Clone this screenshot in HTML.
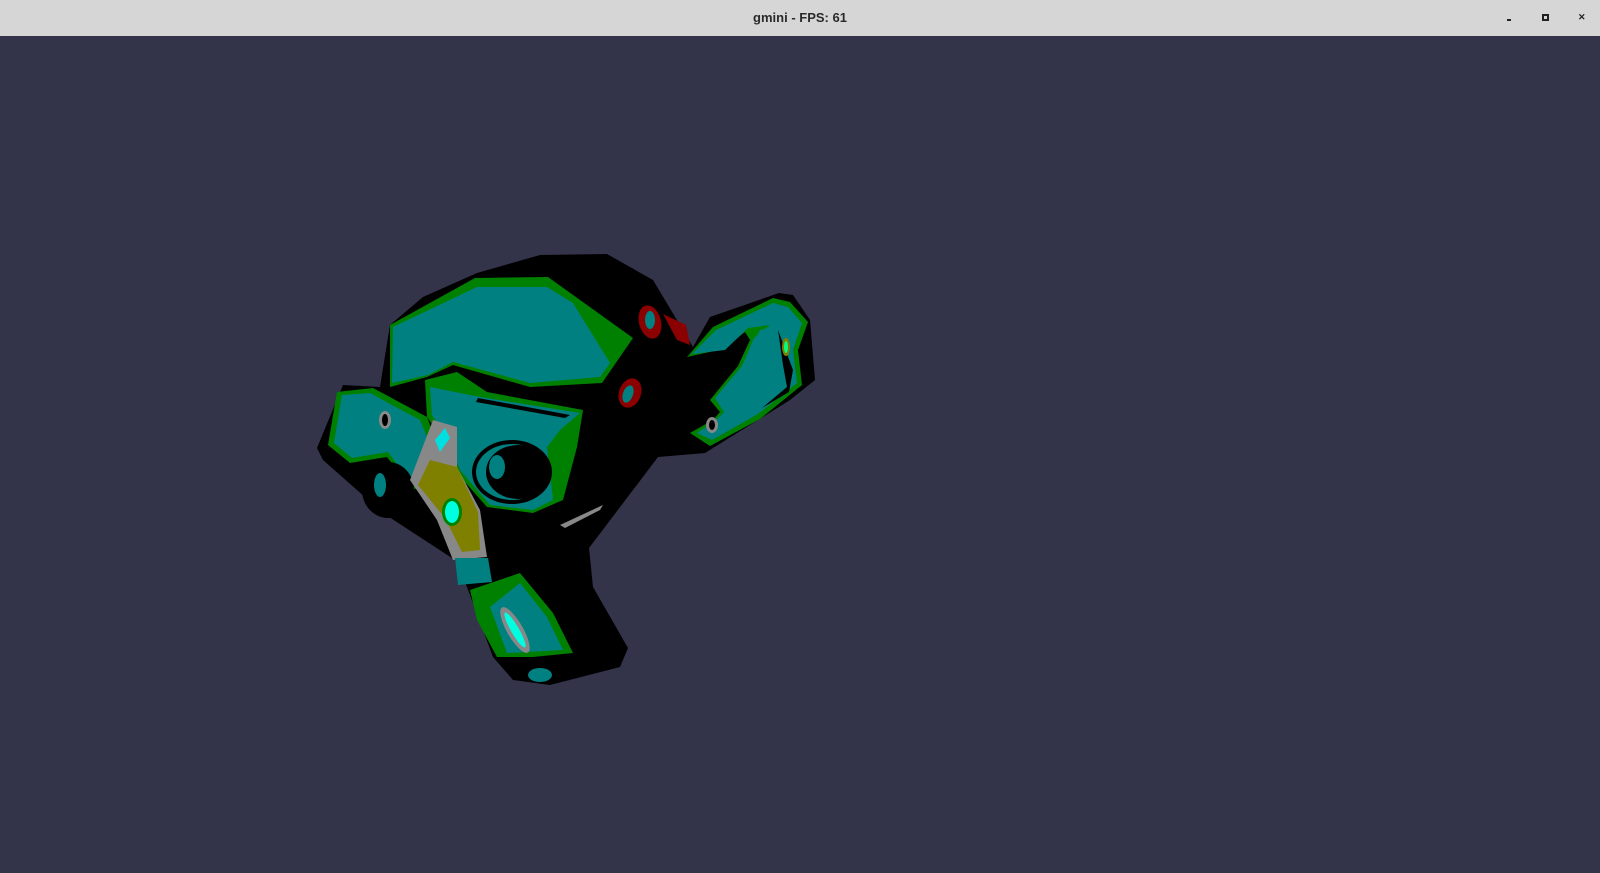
<!DOCTYPE html>
<html><head><meta charset="utf-8"><style>
html,body{margin:0;padding:0;width:1600px;height:873px;overflow:hidden;background:#33334a;font-family:"Liberation Sans",sans-serif}
#tb{position:absolute;left:0;top:0;width:1600px;height:36px;background:#d6d6d6;}
#t{position:absolute;left:0;width:1600px;top:10px;text-align:center;font-size:13px;font-weight:bold;color:#2a2a2a}
svg{position:absolute;left:0;top:0}
</style></head><body>
<div id="tb"><div id="t">gmini - FPS: 61</div>
<div style="position:absolute;left:1507px;top:19px;width:4px;height:2px;background:#222"></div>
<div style="position:absolute;left:1542px;top:14px;width:3px;height:3px;border:2px solid #222"></div>
<div style="position:absolute;left:1578px;top:12px;font-size:9px;font-weight:bold;color:#222">✕</div>
</div>
<svg width="1600" height="873" viewBox="0 0 1600 873">
<polygon fill="#000" points="317,448 343,385 380,387 390,325 423,297 477,273 540,255 607,254 653,280 693,347 710,317 779,293 793,295 810,320 815,380 790,400 705,453 658,457 589,548 593,587 628,648 620,667 550,685 513,680 493,657 467,587 455,560 383,513 323,460"/>
<!-- head top -->
<polygon fill="#008000" points="390,325 475,278 548,277 633,338 602,383 530,387 453,365 427,377 390,387"/>
<polygon fill="#008080" points="393,327 477,287 547,287 573,303 610,363 600,377 530,383 453,362 428,375 392,383"/>
<!-- brow -->
<polygon fill="#008000" points="425,380 457,372 487,392 583,410 577,447 563,500 533,513 487,507 457,473 443,440 427,417"/>
<polygon fill="#008080" points="430,387 480,397 580,413 560,430 547,447 553,500 533,510 490,505 460,470 447,438 432,415"/>
<ellipse cx="512" cy="472" rx="40" ry="32" fill="#000"/>
<ellipse cx="512" cy="472" rx="36" ry="28" fill="#008080"/>
<ellipse cx="518" cy="472" rx="32" ry="27" fill="#000"/>
<ellipse cx="497" cy="467" rx="8" ry="12" fill="#008080"/>
<polygon fill="#000" points="478,398 570,415 565,418 476,402"/>
<!-- left ear -->
<polygon fill="#008000" points="337,392 373,388 427,417 447,470 413,490 387,457 350,463 328,445"/>
<polygon fill="#008080" points="342,395 370,393 420,420 440,468 412,484 388,452 352,458 334,443"/>
<ellipse cx="385" cy="420" rx="6" ry="9" fill="#888"/><ellipse cx="385" cy="420" rx="3" ry="6" fill="#000"/>
<ellipse cx="388" cy="490" rx="26" ry="28" fill="#000"/>
<ellipse cx="380" cy="485" rx="6" ry="12" fill="#008080"/>
<!-- nose -->
<polygon fill="#888" points="433,420 457,427 457,467 480,510 487,557 453,560 437,520 410,480"/>
<polygon fill="#808000" points="430,460 457,467 478,512 480,550 462,552 445,518 418,485"/>
<polygon fill="#00e0e0" points="435,440 445,428 450,438 440,452"/>
<ellipse cx="452" cy="512" rx="10" ry="14" fill="#008000"/>
<ellipse cx="452" cy="512" rx="7" ry="11" fill="#00ffe0"/>
<polygon fill="#008080" points="455,558 488,558 492,582 458,585"/>
<!-- chin -->
<polygon fill="#008000" points="470,590 520,573 553,613 573,653 533,657 497,657 477,620"/>
<polygon fill="#008080" points="490,607 520,583 547,617 563,650 507,653"/>
<ellipse cx="515" cy="630" rx="26" ry="8" fill="#888" transform="rotate(60 515 630)"/>
<ellipse cx="515" cy="630" rx="20" ry="4" fill="#00ffe0" transform="rotate(60 515 630)"/>
<ellipse cx="540" cy="675" rx="12" ry="7" fill="#008080"/>
<!-- right ear -->
<polygon fill="#008000" points="687,357 713,327 773,298 790,302 808,322 798,350 802,385 760,419 710,446 690,433 713,420 720,412 710,400 738,366 750,340 745,332 723,349"/>
<polygon fill="#008080" points="692,354 716,330 773,303 788,307 802,323 793,350 797,383 758,414 712,440 697,433 715,421 724,412 715,398 742,366 754,338 770,325 748,328 725,350"/>
<polygon fill="#008080" points="742,366 760,330 780,325 790,360 785,395 755,410 722,420 730,400"/>
<polygon fill="#000" points="778,330 793,370 789,392 762,408 787,387 783,365"/>
<ellipse cx="712" cy="425" rx="6" ry="8" fill="#888"/><ellipse cx="712" cy="425" rx="3" ry="5" fill="#000"/>
<ellipse cx="786" cy="347" rx="4" ry="9" fill="#808000"/><ellipse cx="786" cy="347" rx="2" ry="6" fill="#00ff80"/>
<!-- red -->
<ellipse cx="650" cy="322" rx="11" ry="17" fill="#8b0000" transform="rotate(-15 650 322)"/>
<ellipse cx="650" cy="320" rx="5" ry="9" fill="#008080"/>
<polygon fill="#8b0000" points="663,314 686,325 690,345 677,340"/>
<ellipse cx="630" cy="393" rx="11" ry="15" fill="#8b0000" transform="rotate(20 630 393)"/>
<ellipse cx="628" cy="394" rx="5" ry="9" fill="#008080" transform="rotate(20 628 394)"/>
<polygon fill="#888" points="560,525 603,505 600,510 565,528"/>
</svg>
</body></html>
